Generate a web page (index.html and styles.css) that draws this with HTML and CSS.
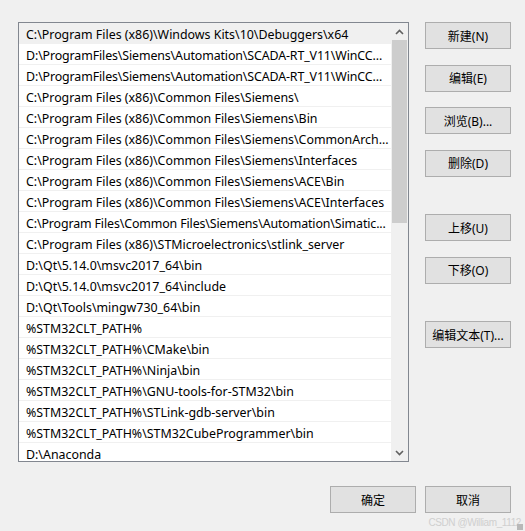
FILE: index.html
```html
<!DOCTYPE html>
<html lang="zh-CN">
<head>
  <meta charset="UTF-8" />
  <meta name="viewport" content="width=device-width, initial-scale=1.0">
  <title>编辑环境变量</title>
  <link rel="stylesheet" href="styles.css">
</head>
<body>

  <div class="dialog">
    <div class="main">
      <div class="listbox">
        <ul class="paths">
          <li class="hot">C:\Program Files (x86)\Windows Kits\10\Debuggers\x64</li>
          <li class="long">D:\ProgramFiles\Siemens\Automation\SCADA-RT_V11\WinCC...</li>
          <li class="long">D:\ProgramFiles\Siemens\Automation\SCADA-RT_V11\WinCC...</li>
          <li>C:\Program Files (x86)\Common Files\Siemens\</li>
          <li>C:\Program Files (x86)\Common Files\Siemens\Bin</li>
          <li>C:\Program Files (x86)\Common Files\Siemens\CommonArch...</li>
          <li>C:\Program Files (x86)\Common Files\Siemens\Interfaces</li>
          <li>C:\Program Files (x86)\Common Files\Siemens\ACE\Bin</li>
          <li>C:\Program Files (x86)\Common Files\Siemens\ACE\Interfaces</li>
          <li class="long">C:\Program Files\Common Files\Siemens\Automation\Simatic...</li>
          <li>C:\Program Files (x86)\STMicroelectronics\stlink_server</li>
          <li>D:\Qt\5.14.0\msvc2017_64\bin</li>
          <li>D:\Qt\5.14.0\msvc2017_64\include</li>
          <li>D:\Qt\Tools\mingw730_64\bin</li>
          <li>%STM32CLT_PATH%</li>
          <li>%STM32CLT_PATH%\CMake\bin</li>
          <li>%STM32CLT_PATH%\Ninja\bin</li>
          <li>%STM32CLT_PATH%\GNU-tools-for-STM32\bin</li>
          <li>%STM32CLT_PATH%\STLink-gdb-server\bin</li>
          <li>%STM32CLT_PATH%\STM32CubeProgrammer\bin</li>
          <li>D:\Anaconda</li>
        </ul>
        <div class="scrollbar">
          <span class="arrow">
            <svg width="9" height="6" viewBox="0 0 9 6"><path d="M1 5 L4.5 1.5 L8 5" fill="none" stroke="#606060" stroke-width="1.6"/></svg>
          </span>
          <div class="track"><div class="thumb"></div></div>
          <span class="arrow">
            <svg width="9" height="6" viewBox="0 0 9 6"><path d="M1 1 L4.5 4.5 L8 1" fill="none" stroke="#606060" stroke-width="1.6"/></svg>
          </span>
        </div>
      </div>

      <div class="side">
        <button class="btn">新建(N)</button>
        <button class="btn">编辑(E)</button>
        <button class="btn">浏览(B)...</button>
        <button class="btn">删除(D)</button>
        <button class="btn gap">上移(U)</button>
        <button class="btn">下移(O)</button>
        <button class="btn gap">编辑文本(T)...</button>
      </div>
    </div>

    <div class="footer">
      <button class="btn">确定</button>
      <button class="btn">取消</button>
    </div>

    <span class="mark">CSDN @William_1112</span>
    <span class="grip"></span>
  </div>

</body>
</html>
```

FILE: styles.css
```css
:root {
  --bg: #f0f0f0;
  --white: #fff;
  --border: #828790;
  --btn: #e1e1e1;
  --btn-border: #adadad;
}

body {
  font-family: "Noto Sans", "Noto Sans CJK SC", sans-serif;
  font-size: 12px;
  color: #000;
  background: var(--bg);
  margin: 0;
  padding: 0;
}

.dialog {
  position: relative;
  width: 525px;
  height: 531px;
  padding: 22px 14px 0 18px;
  box-sizing: border-box;
}

.main {
  display: flex;
  gap: 16px;
}

.listbox {
  display: flex;
  width: 391px;
  height: 440px;
  border: 1px solid var(--border);
  background: var(--white);
  box-sizing: border-box;
  overflow: hidden;
}

.paths {
  list-style: none;
  margin: 0;
  padding: 0;
  flex: 1;
  min-width: 0;
}

.paths li {
  height: 20px;
  line-height: 23px;
  font-size: 12.4px;
  padding: 0 0 0 7px;
  border-bottom: 1px solid #f0f0f0;
  white-space: nowrap;
  overflow: hidden;
}

/* rows that the list already shortened with "..." */
.paths li.long {
  letter-spacing: -0.12px;
}

.paths li.hot {
  background: #f0f0f0;
}

.scrollbar {
  width: 17px;
  background: var(--bg);
  display: flex;
  flex-direction: column;
}

.arrow {
  height: 17px;
  display: flex;
  align-items: center;
  justify-content: center;
}

.track {
  flex: 1;
  padding: 0 1px;
}

.thumb {
  height: 183px;
  background: #cdcdcd;
}

.side {
  display: flex;
  flex-direction: column;
  gap: 15.5px;
}

.btn {
  width: 86px;
  height: 27px;
  font-family: inherit;
  font-size: 12px;
  color: #000;
  background: var(--btn);
  border: 1px solid var(--btn-border);
  padding: 0;
  box-sizing: border-box;
}

.side .gap {
  margin-top: 22px;
}

.footer {
  display: flex;
  justify-content: flex-end;
  gap: 9px;
  margin-top: 24px;
}

.mark {
  position: absolute;
  right: 4px;
  bottom: 3px;
  font-family: "Liberation Sans", sans-serif;
  font-size: 10px;
  letter-spacing: -0.4px;
  color: #cfcfcf;
}

.grip {
  position: absolute;
  right: 2px;
  bottom: 1px;
  width: 6px;
  height: 6px;
  background: radial-gradient(circle, #b8b8b8 1px, transparent 1.2px) 0 0 / 2px 2px;
}
```
